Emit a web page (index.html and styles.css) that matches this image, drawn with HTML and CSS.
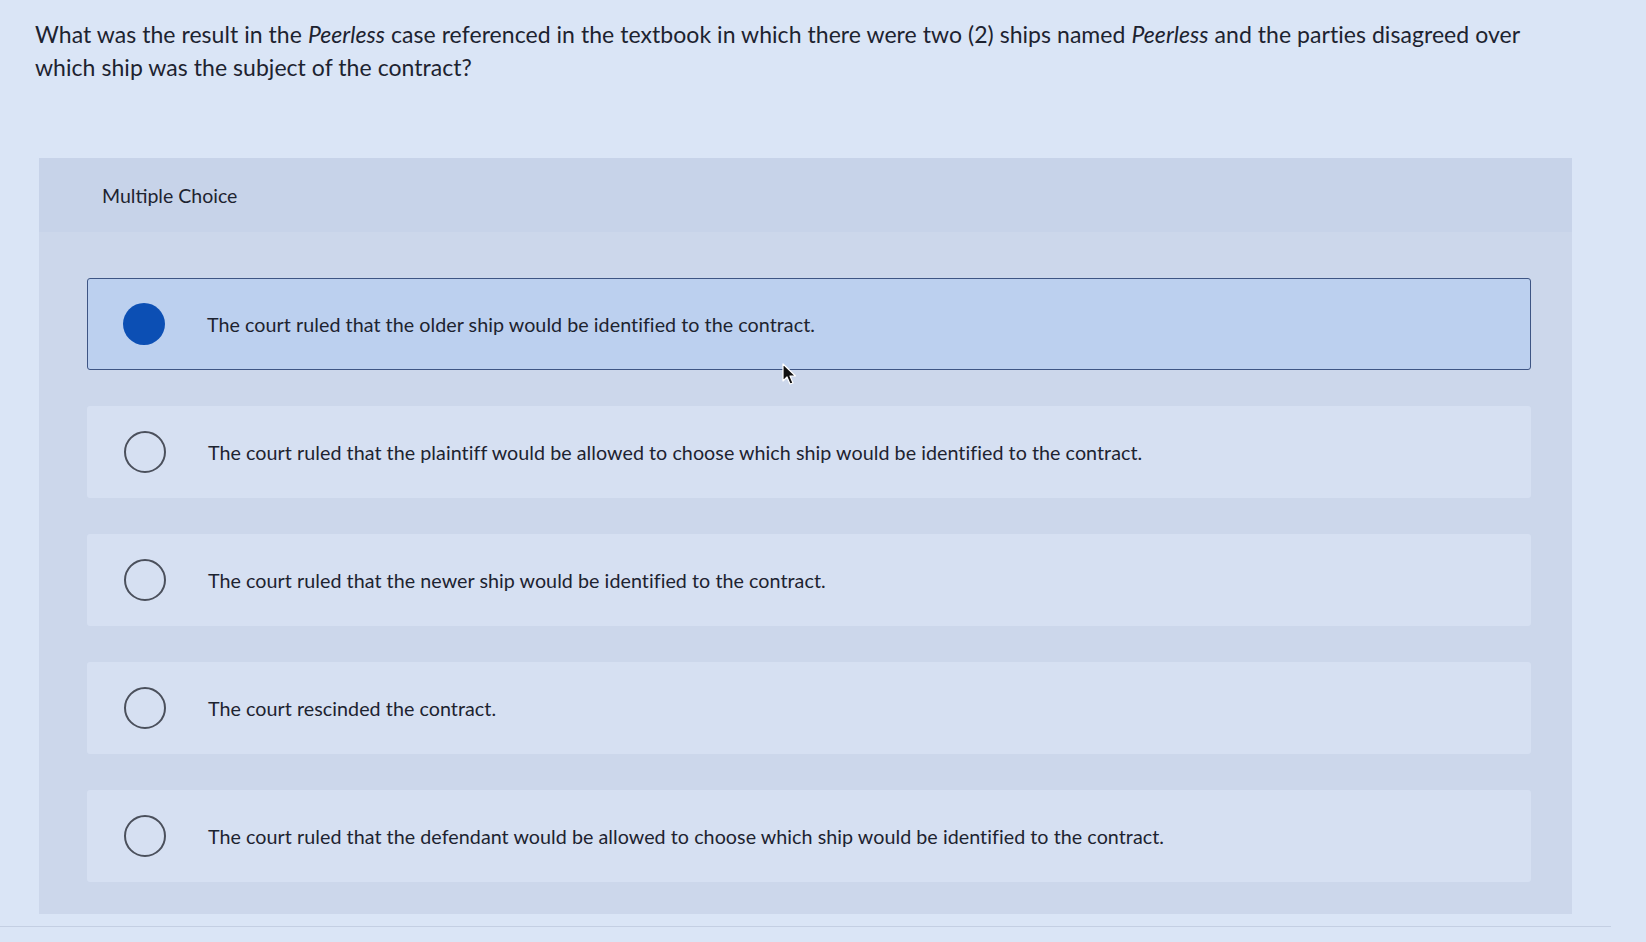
FILE: index.html
```html
<!DOCTYPE html>
<html lang="en">
<head>
<meta charset="utf-8">
<title>Multiple Choice</title>
<link rel="stylesheet" href="styles.css">
</head>
<body>
<div class="page">
  <p class="question"><span>What was the result in the </span><em>Peerless</em><span> case referenced in the textbook in which there were two (2) ships named </span><em>Peerless</em><span> and the parties disagreed over </span><span>which ship was the subject of the contract?</span></p>

  <section class="card">
    <div class="card-header">Multiple Choice</div>
    <div class="options">
      <div class="option selected">
        <span class="radio checked"></span>
        <span class="label">The court ruled that the older ship would be identified to the contract.</span>
        <svg class="cursor" width="16" height="24" viewBox="0 0 16 24"><path d="M1 1 L1 18 L5 14 L8 21 L11 20 L8 13 L13.5 13 Z" fill="#111" stroke="#fff" stroke-width="1.2" stroke-linejoin="round"/></svg>
      </div>
      <div class="option">
        <span class="radio"></span>
        <span class="label">The court ruled that the plaintiff would be allowed to choose which ship would be identified to the contract.</span>
      </div>
      <div class="option">
        <span class="radio"></span>
        <span class="label">The court ruled that the newer ship would be identified to the contract.</span>
      </div>
      <div class="option">
        <span class="radio"></span>
        <span class="label">The court rescinded the contract.</span>
      </div>
      <div class="option">
        <span class="radio"></span>
        <span class="label">The court ruled that the defendant would be allowed to choose which ship would be identified to the contract.</span>
      </div>
    </div>
  </section>
  <div class="footer-line"></div>
</div>
</body>
</html>
```

FILE: styles.css
```css
html, body {
  margin: 0;
  padding: 0;
}

body {
  width: 1646px;
  height: 942px;
  overflow: hidden;
  background: #dae5f6;
  font-family: Lato, "Open Sans", "Liberation Sans", sans-serif;
  color: #1d2330;
}

.page {
  display: flex;
  flex-direction: column;
  padding: 18px 0 0 35px;
}

.question {
  margin: 0;
  width: 1545px;
  font-size: 23px;
  line-height: 33px;
  letter-spacing: 0.05px;
}

.question em {
  font-style: italic;
}

.card {
  margin: 74px 0 0 4px;
  width: 1533px;
  background: #cbd6ea;
  display: flex;
  flex-direction: column;
}

.card-header {
  height: 74px;
  display: flex;
  align-items: center;
  padding-left: 63px;
  font-size: 19.5px;
  background: #c7d3e9;
}

.options {
  display: flex;
  flex-direction: column;
  gap: 36px;
  padding: 46px 41px 32px 48px;
  background: #ccd7eb;
}

.option {
  position: relative;
  height: 92px;
  display: flex;
  align-items: center;
  background: #d6e0f2;
  border-radius: 3px;
  box-sizing: border-box;
}

.option.selected {
  background: #bcd0ef;
  border: 1.5px solid #3e5584;
}

.radio {
  flex: none;
  width: 38px;
  height: 38px;
  border: 2px solid #4b505c;
  border-radius: 50%;
  margin-left: 37px;
}

.radio.checked {
  width: 42px;
  height: 42px;
  border: none;
  background: #0c4fb4;
  margin-left: 35px;
}

.label {
  margin-left: 42px;
  font-size: 19.7px;
  letter-spacing: 0.05px;
}

.cursor {
  position: absolute;
  left: 694px;
  top: 84px;
}

.footer-line {
  margin-top: 12px;
  width: 1611px;
  margin-left: -35px;
  height: 1px;
  background: #c4cfe3;
}
```
